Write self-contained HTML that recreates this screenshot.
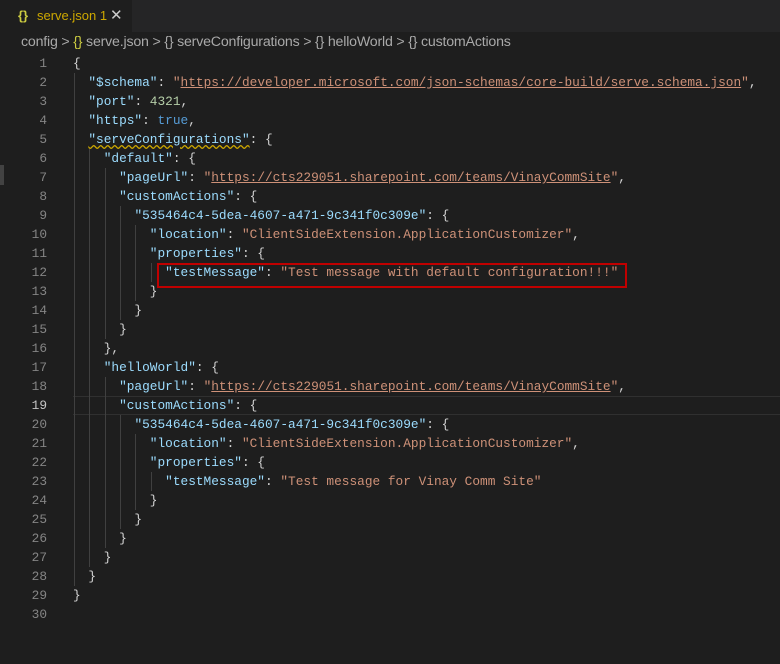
<!DOCTYPE html><html><head><style>
body{margin:0;width:780px;height:664px;background:#1e1e1e;overflow:hidden;font-family:"Liberation Sans",sans-serif}
.tabs{position:absolute;top:0;left:0;width:780px;height:32px;background:#252526}
.tab{position:absolute;left:0;top:0;width:132px;height:32px;background:#1e1e1e;color:#cca700;font-size:13px;line-height:32px}
.bc{position:absolute;top:34px;left:21px;color:#a9a9a9;font-size:14.2px;white-space:pre;letter-spacing:-0.2px}
.ed{position:absolute;top:54px;left:0;width:780px}
.l{position:relative;height:19px;line-height:19px;font-family:"Liberation Mono",monospace;font-size:12.8px;white-space:pre;color:#d4d4d4}
.n{position:absolute;left:0;width:47px;text-align:right;color:#858585}
.c{position:absolute;left:73px}
.k{color:#9cdcfe}.s{color:#ce9178}.u{color:#ce9178;text-decoration:underline}.b{color:#569cd6}.nm{color:#b5cea8}
.hl{position:absolute;left:73px;right:0;top:0;bottom:0;border-top:1px solid #303030;border-bottom:1px solid #303030}
.g{position:absolute;top:0;bottom:0;width:1px;background:#404040}
</style></head><body>
<div class="tabs"><div class="tab"><span style="position:absolute;left:18px;font-weight:bold;color:#cbcb41">{}</span><span style="position:absolute;left:37px">serve.json 1</span><span style="position:absolute;left:110px;color:#ccc;font-size:15px">✕</span></div></div>
<div class="bc">config &gt; <span style="color:#cbcb41">{}</span> serve.json &gt; {} serveConfigurations &gt; {} helloWorld &gt; {} customActions</div>
<div class="ed" id="ed"></div>
<div style="position:absolute;left:0;top:165px;width:4px;height:20px;background:#424242"></div>
<div style="position:absolute;left:157px;top:263px;width:466px;height:21px;border:2px solid #c00000"></div>
<script>
const K=s=>`<span class="k">"${s}"</span>`,S=s=>`<span class="s">"${s}"</span>`,U=s=>`<span class="s">"</span><span class="u">${s}</span><span class="s">"</span>`;
const L=[
[0,'{'],
[1,K('$schema')+': '+U('https://developer.microsoft.com/json-schemas/core-build/serve.schema.json')+','],
[1,K('port')+': <span class="nm">4321</span>,'],
[1,K('https')+': <span class="b">true</span>,'],
[1,'<span class="k" style="text-decoration:underline wavy #cca700">"serveConfigurations"</span>: {'],
[2,K('default')+': {'],
[3,K('pageUrl')+': '+U('https://cts229051.sharepoint.com/teams/VinayCommSite')+','],
[3,K('customActions')+': {'],
[4,K('535464c4-5dea-4607-a471-9c341f0c309e')+': {'],
[5,K('location')+': '+S('ClientSideExtension.ApplicationCustomizer')+','],
[5,K('properties')+': {'],
[6,K('testMessage')+': '+S('Test message with default configuration!!!')],
[5,'}'],[4,'}'],[3,'}'],[2,'},'],
[2,K('helloWorld')+': {'],
[3,K('pageUrl')+': '+U('https://cts229051.sharepoint.com/teams/VinayCommSite')+','],
[3,K('customActions')+': {'],
[4,K('535464c4-5dea-4607-a471-9c341f0c309e')+': {'],
[5,K('location')+': '+S('ClientSideExtension.ApplicationCustomizer')+','],
[5,K('properties')+': {'],
[6,K('testMessage')+': '+S('Test message for Vinay Comm Site')],
[5,'}'],[4,'}'],[3,'}'],[2,'}'],[1,'}'],[0,'}'],[0,'']];
let h='';L.forEach((x,i)=>{let g='';for(let j=0;j<x[0];j++)g+=`<div class="g" style="left:${74+j*15.36}px"></div>`;
h+=`<div class="l">${i==18?'<div class="hl"></div>':''}${g}<span class="n" style="${i==18?'color:#c6c6c6':''}">${i+1}</span><span class="c">${'  '.repeat(x[0])}${x[1]}</span></div>`});
document.getElementById('ed').innerHTML=h;
</script></body></html>
